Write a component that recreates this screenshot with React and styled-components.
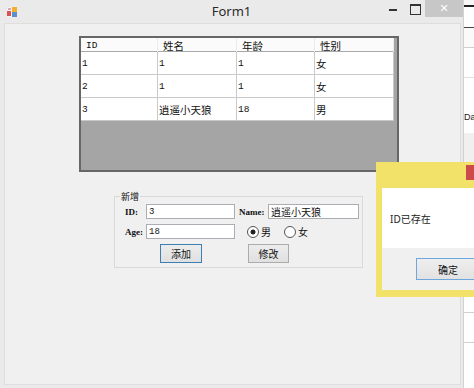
import styled, { createGlobalStyle } from 'styled-components';

const GlobalStyle = createGlobalStyle`
  html, body {
    margin: 0;
    padding: 0;
    background: #ececec;
  }
  body {
    font-family: "Noto Sans", "Noto Sans CJK SC", sans-serif;
    overflow: hidden;
  }
  * { box-sizing: border-box; }
`;

const Desktop = styled.div`
  position: relative;
  width: 474px;
  height: 388px;
  overflow: hidden;
  display: flex;
  background: #ececec;
`;

const MainWindow = styled.div`
  width: 464px;
  height: 388px;
  flex: none;
  display: flex;
  flex-direction: column;
  background: #eaeaea;
  border-right: 1px solid #d2d2d2;
`;

const TitleBar = styled.div`
  height: 22px;
  flex: none;
  display: grid;
  grid-template-columns: 1fr auto 1fr;
  align-items: start;
`;

const AppIcon = styled.svg`
  margin: 7px 0 0 7px;
  display: block;
`;

const Title = styled.div`
  font-size: 13px;
  line-height: 23px;
  color: #2a2a2a;
`;

const Controls = styled.div`
  justify-self: end;
  display: flex;
  height: 17px;
`;

const MinBtn = styled.div`
  width: 26px;
  display: flex;
  align-items: center;
  justify-content: center;
  padding-top: 3px;
  &::before {
    content: "";
    width: 8px;
    height: 2px;
    background: #333;
  }
`;

const MaxBtn = styled.div`
  width: 19px;
  display: flex;
  justify-content: center;
  padding-top: 4px;
  &::before {
    content: "";
    width: 9px;
    height: 8px;
    border: 1px solid #333;
    border-top-width: 2px;
  }
`;

const CloseBtn = styled.div`
  width: 38px;
  height: 17px;
  background: #c7c7c7;
  color: #fff;
  display: flex;
  align-items: center;
  justify-content: center;
  font-family: "DejaVu Sans", sans-serif;
  font-size: 11px;
`;

const Client = styled.div`
  flex: 1;
  margin: 1px 2px 3px 4px;
  background: #f0f0f0;
  border: 1px solid #dedede;
  display: flex;
  flex-direction: column;
  align-items: flex-start;
`;

const DataGrid = styled.div`
  margin: 12px 0 0 74px;
  width: 320px;
  height: 136px;
  border: 2px solid #676767;
  background: #a5a5a5;
  display: flex;
  flex-direction: column;
  font-family: "Liberation Mono", "Noto Sans CJK SC", monospace;
  font-size: 9.5px;
  color: #111;
`;

const GridRow = styled.div`
  display: grid;
  grid-template-columns: 77px 79px 78px 79px;
  height: ${p => (p.$header ? 14 : 23)}px;
  background: ${p => (p.$header ? '#fbfbfb' : '#fff')};
  border-bottom: 1px solid ${p => (p.$header ? '#a9a9a9' : '#c9c9c9')};
  width: 313px;
`;

const Cell = styled.div`
  display: flex;
  align-items: center;
  padding-left: ${p => (p.$header ? 5 : 1)}px;
  border-right: 1px solid ${p => (p.$header ? '#ececec' : '#c9c9c9')};
  white-space: nowrap;
  font-size: ${p => (p.$cjk ? 10.5 : 9.5)}px;
`;

const Group = styled.fieldset`
  margin: 19px 0 0 109px;
  padding: 2px 0 4px 10px;
  width: 249px;
  border: 1px solid #d9d9d9;
  display: flex;
  flex-direction: column;
  gap: 5px;
`;

const Legend = styled.legend`
  padding: 0 1px;
  margin-left: -5px;
  font-family: "Noto Sans CJK SC", sans-serif;
  font-size: 9px;
  line-height: 11px;
  color: #111;
`;

const FormRow = styled.div`
  display: flex;
  align-items: center;
  height: ${p => p.$h || 15}px;
`;

const FieldLabel = styled.label`
  width: ${p => p.$w}px;
  font-family: "Liberation Serif", serif;
  font-weight: bold;
  font-size: 9px;
  color: #111;
  margin-left: ${p => p.$ml || 0}px;
  white-space: nowrap;
`;

const TextBox = styled.div`
  width: ${p => p.$w}px;
  height: 15px;
  border: 1px solid #abadb3;
  background: #fff;
  padding-left: 2px;
  display: flex;
  align-items: center;
  font-family: "Liberation Mono", "Noto Sans CJK SC", monospace;
  font-size: ${p => (p.$cjk ? 10 : 9)}px;
  color: #111;
  white-space: nowrap;
`;

const RadioGroup = styled.div`
  display: flex;
  align-items: center;
  gap: 13px;
  margin-left: 12px;
`;

const Radio = styled.div`
  display: flex;
  align-items: center;
  gap: 2px;
  font-family: "Noto Sans CJK SC", sans-serif;
  font-size: 10px;
  color: #111;
  &::before {
    content: "";
    width: 10px;
    height: 10px;
    border-radius: 50%;
    border: 1px solid #555;
    background: ${p => (p.$checked ? 'radial-gradient(circle, #222 0 2.2px, #fff 2.8px)' : '#fff')};
  }
`;

const Button = styled.div`
  width: ${p => p.$w}px;
  height: 19px;
  margin-left: ${p => p.$ml}px;
  border: 1px solid ${p => (p.$focus ? '#3c7fb1' : '#acacac')};
  background: linear-gradient(#ececec, #e0e0e0);
  display: flex;
  align-items: center;
  justify-content: center;
  font-family: "Noto Sans CJK SC", sans-serif;
  font-size: 10px;
  color: #111;
`;

const BackWindow = styled.div`
  flex: 1;
  background: #f7f7f7;
  display: flex;
  flex-direction: column;
  overflow: hidden;
`;

const BackStrip = styled.div`
  height: ${p => p.$h}px;
  background: ${p => p.$bg || 'transparent'};
  border-bottom: ${p => (p.$line ? `${p.$lw || 1}px solid ${p.$line}` : 'none')};
  font-size: 9px;
  color: #222;
  font-family: "Liberation Sans", sans-serif;
  padding-top: ${p => p.$pt || 0}px;
  white-space: nowrap;
`;

const MessageBox = styled.div`
  position: absolute;
  left: 376px;
  top: 162px;
  width: 110px;
  height: 135px;
  background: #f3e26a;
  padding: 26px 0 7px 6px;
  display: flex;
  flex-direction: column;
`;

const MsgClose = styled.div`
  position: absolute;
  left: 90px;
  top: 3px;
  width: 30px;
  height: 15px;
  background: #cc4a4a;
`;

const MsgBody = styled.div`
  height: 60px;
  background: #fff;
  display: flex;
  align-items: center;
  padding-left: 8px;
  font-family: "Noto Sans", "Noto Sans CJK SC", sans-serif;
  font-size: 10px;
  color: #222;
`;

const MsgFooter = styled.div`
  flex: 1;
  background: #f0f0f0;
  padding: 10px 0 0 34px;
`;

const MsgButton = styled.div`
  width: 64px;
  height: 22px;
  border: 1px solid #6ea6de;
  background: linear-gradient(#eeeeee, #e2e2e2);
  display: flex;
  align-items: center;
  justify-content: center;
  font-family: "Noto Sans CJK SC", sans-serif;
  font-size: 10px;
  color: #111;
`;

const rows = [
  ['1', '1', '1', '女'],
  ['2', '1', '1', '女'],
  ['3', '逍遥小天狼', '18', '男'],
];

const isCjk = s => /[\u4e00-\u9fff]/.test(s);

export default function App() {
  return (
    <Desktop>
      <GlobalStyle />
      <MainWindow>
        <TitleBar>
          <AppIcon width="10" height="10" viewBox="0 0 10 10">
            <rect x="0" y="0" width="10" height="10" fill="#f4f4f4" />
            <rect x="0" y="4" width="4" height="5" fill="#d9534f" />
            <rect x="5" y="0" width="5" height="5" fill="#f0b030" />
            <rect x="5" y="5" width="5" height="5" fill="#5b8fd0" />
            <rect x="1" y="1" width="3" height="2" fill="#e6a0b0" />
          </AppIcon>
          <Title>Form1</Title>
          <Controls>
            <MinBtn />
            <MaxBtn />
            <CloseBtn>✕</CloseBtn>
          </Controls>
        </TitleBar>
        <Client>
          <DataGrid>
            <GridRow $header>
              {['ID', '姓名', '年龄', '性别'].map(h => (
                <Cell key={h} $header $cjk={isCjk(h)}>{h}</Cell>
              ))}
            </GridRow>
            {rows.map((r, i) => (
              <GridRow key={i}>
                {r.map((c, j) => (
                  <Cell key={j} $cjk={isCjk(c)}>{c}</Cell>
                ))}
              </GridRow>
            ))}
          </DataGrid>
          <Group>
            <Legend>新增</Legend>
            <FormRow>
              <FieldLabel $w={21}>ID:</FieldLabel>
              <TextBox $w={89}>3</TextBox>
              <FieldLabel $w={29} $ml={4}>Name:</FieldLabel>
              <TextBox $w={91} $cjk>逍遥小天狼</TextBox>
            </FormRow>
            <FormRow>
              <FieldLabel $w={21}>Age:</FieldLabel>
              <TextBox $w={89}>18</TextBox>
              <RadioGroup>
                <Radio $checked>男</Radio>
                <Radio>女</Radio>
              </RadioGroup>
            </FormRow>
            <FormRow $h={19}>
              <Button $w={42} $ml={35} $focus>添加</Button>
              <Button $w={41} $ml={46}>修改</Button>
            </FormRow>
          </Group>
        </Client>
      </MainWindow>
      <BackWindow>
        <BackStrip $h={5} />
        <BackStrip $h={2} $bg="#222" />
        <BackStrip $h={21} $bg="#fff" $line="#444" />
        <BackStrip $h={20} $bg="#fafafa" $line="#cfcfcf" />
        <BackStrip $h={30} $bg="#fff" $line="#e0e0e0" />
        <BackStrip $h={55} $bg="#fff" $pt={34}>Da</BackStrip>
        <BackStrip $h={150} $bg="#f0f0f0" />
        <BackStrip $h={30} $bg="#fff" $line="#d0d0d0" />
        <BackStrip $h={30} $bg="#fff" $line="#d0d0d0" />
        <BackStrip $h={45} $bg="#fff" />
      </BackWindow>
      <MessageBox>
        <MsgClose />
        <MsgBody>ID已存在</MsgBody>
        <MsgFooter>
          <MsgButton>确定</MsgButton>
        </MsgFooter>
      </MessageBox>
    </Desktop>
  );
}
